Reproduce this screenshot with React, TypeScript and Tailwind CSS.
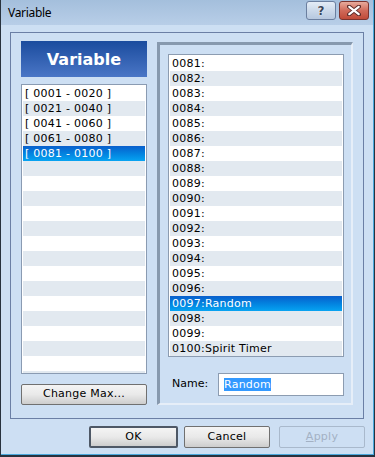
import React from "react";

const leftItems = [
  "[ 0001 - 0020 ]",
  "[ 0021 - 0040 ]",
  "[ 0041 - 0060 ]",
  "[ 0061 - 0080 ]",
  "[ 0081 - 0100 ]",
];

const rightItems = Array.from({ length: 20 }, (_, i) => {
  const n = 81 + i;
  const name = n === 97 ? "Random" : n === 100 ? "Spirit Timer" : "";
  return String(n).padStart(4, "0") + ":" + name;
});

function Row({ text, index, selected }: { text: string; index: number; selected: boolean }) {
  const base = "h-[15px] shrink-0 leading-[15px] whitespace-nowrap tracking-[0.25px]";
  if (selected)
    return (
      <div className={`${base} pl-[2px] text-white bg-gradient-to-b from-[#0a5fcc] to-[#08a4f2]`}>{text}</div>
    );
  return (
    <div className={`${base} pl-[2px] text-black ${index % 2 === 1 ? "bg-[#e2e9f0]" : "bg-white"}`}>{text}</div>
  );
}

function Btn({ children, className = "" }: { children: React.ReactNode; className?: string }) {
  return (
    <div
      className={`flex items-center justify-center rounded-[2px] bg-gradient-to-b from-[#f4f4f4] via-[#e9e9e9] to-[#cdcdcd] text-black tracking-[0.25px] ${className}`}
    >
      {children}
    </div>
  );
}

export default function App() {
  const leftRows = Array.from({ length: 20 }, (_, i) => leftItems[i] ?? "");
  return (
    <div className="w-[375px] h-[457px] border-l border-r border-b-2 border-[#28323e] font-['DejaVu_Sans',sans-serif] text-[11px]">
      <div className="w-full h-full flex flex-col border-r border-b border-[#4aa8dc] bg-[#cddff3]">
        {/* Title bar */}
        <div className="h-[25px] shrink-0 flex items-start justify-between bg-gradient-to-b from-[#a4bfdc] to-[#b8cee8]">
          <div className="pl-[7px] pt-[5px] font-['Noto_Sans',sans-serif] text-[12px] leading-[15px] tracking-[-0.3px] text-black">
            Variable
          </div>
          <div className="flex pt-[1px] pr-[4px] gap-[3px]">
            <div className="w-[30px] h-[19px] rounded-[3px] border border-[#6b7f9f] bg-gradient-to-b from-[#e4ecf6] via-[#cbd9ea] to-[#b6c8df] flex items-center justify-center">
              <span className="font-['DejaVu_Sans',sans-serif] font-bold text-[12px] leading-[12px] text-[#3a4658] [text-shadow:0_0_1px_#fff,0_0_1px_#fff]">
                ?
              </span>
            </div>
            <div className="w-[30px] h-[19px] rounded-[3px] border border-[#7a3430] bg-gradient-to-b from-[#e6aa9c] via-[#d06a5a] to-[#c04a38] flex items-center justify-center">
              <svg width="14" height="11" viewBox="0 0 14 11">
                <path d="M2 1.5 L12 9.5 M12 1.5 L2 9.5" stroke="#5a2a28" strokeWidth="4" strokeLinecap="round" />
                <path d="M2.3 1.8 L11.7 9.2 M11.7 1.8 L2.3 9.2" stroke="#ffffff" strokeWidth="2.2" strokeLinecap="round" />
              </svg>
            </div>
          </div>
        </div>

        {/* Client */}
        <div className="flex-1 flex flex-col">
          {/* Group box */}
          <div className="mt-[7px] mx-[9px] h-[387px] border border-[#6b7fa5] flex pl-[10px] pt-[8px] pb-[13px]">
            {/* Left column */}
            <div className="w-[126px] flex flex-col">
              <div className="h-[36px] shrink-0 flex items-center justify-center bg-gradient-to-b from-[#1a4c9e] to-[#4a76c6]">
                <span className="font-['DejaVu_Sans',sans-serif] font-bold text-[16px] text-white leading-[20px] pt-[1px]">
                  Variable
                </span>
              </div>
              <div className="mt-[7px] h-[290px] border border-[#8a9bb2] bg-white p-[1px] flex flex-col overflow-hidden">
                {leftRows.map((t, i) => (
                  <Row key={i} text={t} index={i} selected={i === 4} />
                ))}
              </div>
              <Btn className="mt-[10px] h-[21px] border border-[#707070]">Change Max...</Btn>
            </div>

            {/* Right panel */}
            <div className="ml-[10px] mt-[1px] w-[196px] h-[363px] border-t-[3px] border-l-[3px] border-r-2 border-b-2 border-t-[#8799ae] border-l-[#8799ae] border-r-[#e6eef8] border-b-[#e6eef8] flex flex-col pl-[8px] pt-[9px] pb-[7px] pr-[7px]">
              <div className="h-[303px] border border-[#8c9cb1] bg-white p-[1px] flex flex-col overflow-hidden">
                {rightItems.map((t, i) => (
                  <Row key={i} text={t} index={i} selected={i === 16} />
                ))}
              </div>
              <div className="mt-[16px] h-[23px] flex items-center">
                <span className="pl-[4px] text-black">Name:</span>
                <div className="ml-auto w-[126px] h-[23px] border border-[#8c9cb1] bg-white flex items-center pl-[5px]">
                  <span className="bg-[#3399ff] text-white leading-[13px] h-[13px] tracking-[0.25px]">Random</span>
                </div>
              </div>
            </div>
          </div>

          {/* Bottom buttons */}
          <div className="mt-[7px] flex pl-[88px]">
            <Btn className="w-[89px] h-[22px] border-2 border-[#4e5866]">OK</Btn>
            <Btn className="ml-[6px] w-[86px] h-[22px] border border-[#707070]">Cancel</Btn>
            <div className="ml-[9px] w-[86px] h-[22px] rounded-[2px] border border-[#a9b9cc] flex items-center justify-center text-[#a3b1c4] tracking-[0.25px]">
              <span>
                <span className="underline">A</span>pply
              </span>
            </div>
          </div>
        </div>
      </div>
    </div>
  );
}
